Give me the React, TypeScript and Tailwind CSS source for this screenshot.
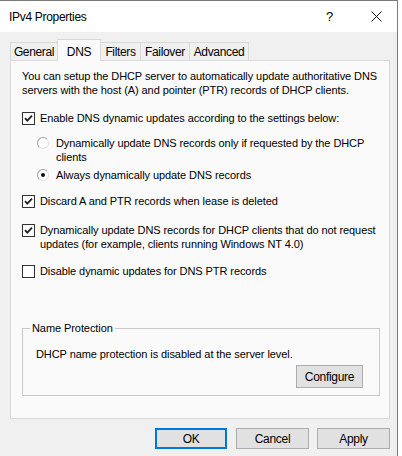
import React from "react";

const Check = ({ checked }: { checked: boolean }) => (
  <span className="mt-[1px] flex h-[13px] w-[13px] shrink-0 items-center justify-center border border-[#333333] bg-white">
    {checked && (
      <svg width="9" height="9" viewBox="0 0 9 9">
        <path d="M1 4.2 L3.3 6.6 L8 1.6" fill="none" stroke="#222" strokeWidth="1.8" />
      </svg>
    )}
  </span>
);

const Radio = ({ checked }: { checked: boolean }) => (
  <span className="mt-[1px] flex h-[12px] w-[12px] shrink-0 items-center justify-center rounded-full border border-t-[#a0a0a0] border-l-[#a0a0a0] border-r-[#e3e3e3] border-b-[#e3e3e3] bg-white">
    {checked && <span className="h-[4px] w-[4px] rounded-full bg-[#111]" />}
  </span>
);

const Btn = ({ label, primary, w }: { label: string; primary?: boolean; w: string }) => (
  <div
    className={
      "flex h-[21px] items-center justify-center bg-[#e1e1e1] text-[12px] text-black " +
      w +
      (primary ? " border-2 border-[#0078d7]" : " border border-[#adadad]")
    }
  >
    {label}
  </div>
);

export default function App() {
  return (
    <div
      className="h-[456px] w-[402px] overflow-hidden bg-white text-black"
      style={{ fontFamily: '"Liberation Sans", Arial, sans-serif' }}
    >
      <div className="flex h-full w-[398px] flex-col border-t border-r border-[#7a7a7a] bg-[#f0f0f0]">
        {/* title bar */}
        <div className="flex h-[31px] shrink-0 items-center bg-white pl-[9px] text-[12px] tracking-[-0.3px]">
          <span className="flex-1">IPv4 Properties</span>
          <span className="mr-[38px] text-[13px]">?</span>
          <svg width="11" height="11" viewBox="0 0 11 11" className="mr-[15px]">
            <path d="M0.5 0.5 L10.5 10.5 M10.5 0.5 L0.5 10.5" stroke="#111" strokeWidth="1" />
          </svg>
        </div>

        <div className="flex flex-col pl-[10px] pr-[7px] pt-[7px]">
          {/* tabs */}
          <div className="relative z-10 flex h-[21px] items-end text-[12px] tracking-[-0.35px]">
            <div className="flex h-[18px] w-[47px] items-center justify-center border-t border-l border-[#d9d9d9] bg-[#f0f0f0]">
              General
            </div>
            <div className="mb-[-1px] flex h-[22px] w-[44px] items-start justify-center border-x border-t border-[#d9d9d9] bg-[#fafafa] pt-[3px]">
              DNS
            </div>
            <div className="flex h-[18px] w-[40px] items-center justify-center border-t border-r border-[#d9d9d9] bg-[#f0f0f0]">
              Filters
            </div>
            <div className="flex h-[18px] w-[49px] items-center justify-center border-t border-r border-[#d9d9d9] bg-[#f0f0f0]">
              Failover
            </div>
            <div className="flex h-[18px] w-[59px] items-center justify-center border-t border-r border-[#d9d9d9] bg-[#f0f0f0]">
              Advanced
            </div>
          </div>

          {/* panel */}
          <div className="flex h-[359px] flex-col border border-[#d9d9d9] bg-[#fafafa] pl-[11px] pr-[8px] pt-[8px] text-[11px] leading-[14px] tracking-[-0.08px]">
            <p>
              You can setup the DHCP server to automatically update authoritative DNS
              <br />
              servers with the host (A) and pointer (PTR) records of DHCP clients.
            </p>

            <div className="mt-[14px] flex items-start gap-[5px]">
              <Check checked />
              <span>Enable DNS dynamic updates according to the settings below:</span>
            </div>

            <div className="mt-[11px] flex items-start gap-[7px] pl-[15px]">
              <Radio checked={false} />
              <span>
                Dynamically update DNS records only if requested by the DHCP
                <br />
                clients
              </span>
            </div>

            <div className="mt-[4px] flex items-start gap-[7px] pl-[15px]">
              <Radio checked />
              <span>Always dynamically update DNS records</span>
            </div>

            <div className="mt-[12px] flex items-start gap-[5px]">
              <Check checked />
              <span>Discard A and PTR records when lease is deleted</span>
            </div>

            <div className="mt-[15px] flex items-start gap-[5px]">
              <Check checked />
              <span>
                Dynamically update DNS records for DHCP clients that do not request
                <br />
                updates (for example, clients running Windows NT 4.0)
              </span>
            </div>

            <div className="mt-[13px] flex items-start gap-[5px]">
              <Check checked={false} />
              <span>Disable dynamic updates for DNS PTR records</span>
            </div>

            {/* group box */}
            <div className="relative mt-[50px] mr-[1px] h-[68px] border border-[#c9c9c9]">
              <span className="absolute left-[7px] top-[-8px] bg-[#fafafa] px-[2px]">Name Protection</span>
              <div className="pl-[13px] pt-[18px]">DHCP name protection is disabled at the server level.</div>
              <div className="mt-[4px] flex justify-end pr-[16px]">
                <div className="flex h-[23px] w-[67px] items-center justify-center border border-[#adadad] bg-[#e1e1e1] text-[12px] tracking-[-0.3px]">
                  Configure
                </div>
              </div>
            </div>
          </div>

          {/* buttons */}
          <div className="mt-[9px] flex justify-end tracking-[-0.3px]">
            <Btn label="OK" primary w="w-[72px]" />
            <div className="w-[9px]" />
            <Btn label="Cancel" w="w-[73px]" />
            <div className="w-[8px]" />
            <Btn label="Apply" w="w-[73px]" />
          </div>
        </div>
      </div>
    </div>
  );
}
